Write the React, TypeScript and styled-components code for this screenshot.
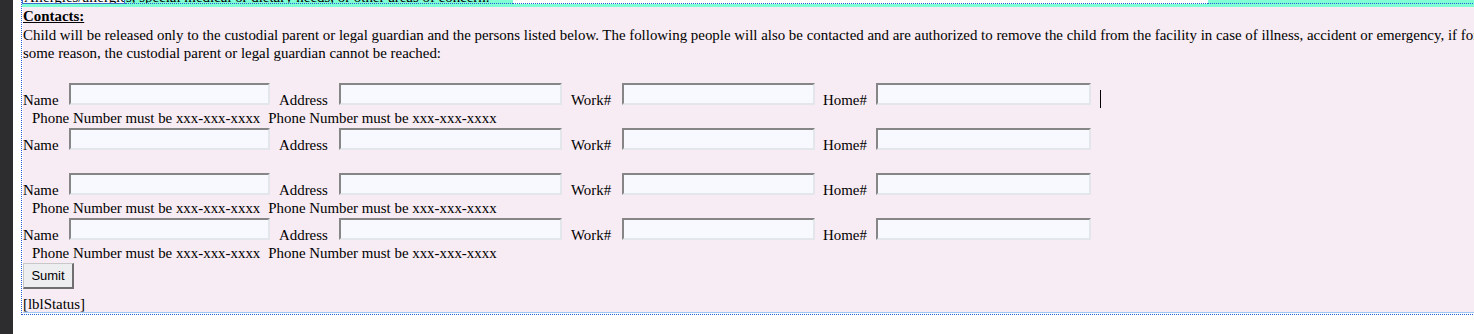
import React from 'react';
import styled, { createGlobalStyle } from 'styled-components';

interface FieldSpec {
    label: string;
    labelWidth: number;
    inputWidth: number;
    after: number;
}

const FIELDS: FieldSpec[] = [
    { label: 'Name', labelWidth: 46, inputWidth: 201, after: 9 },
    { label: 'Address', labelWidth: 60, inputWidth: 223, after: 9 },
    { label: 'Work#', labelWidth: 51, inputWidth: 193, after: 8 },
    { label: 'Home#', labelWidth: 53, inputWidth: 215, after: 0 },
];

const PHONE_MSG = 'Phone Number must be xxx-xxx-xxxx';

const GlobalStyle = createGlobalStyle`
    html, body {
        margin: 0;
        padding: 0;
        background: #ffffff;
        overflow: hidden;
    }
    body {
        font-family: 'Liberation Serif', 'Times New Roman', serif;
        font-size: 14.9px;
        color: #000000;
    }
`;

const Page = styled.div`
    display: flex;
    height: 334px;
    width: 1474px;
    overflow: hidden;
    background: #ffffff;
`;

const SideRail = styled.div`
    flex: none;
    width: 13px;
    background: #2d2d30;
`;

const Gutter = styled.div`
    flex: none;
    width: 8px;
`;

const Designer = styled.div`
    flex: none;
    width: 1520px;
    height: 315px;
    display: flex;
    flex-direction: column;
    border-left: 1px dotted #2a5bd7;
    border-bottom: 1px dotted #2a5bd7;
    box-sizing: border-box;
`;

const TopBand = styled.div`
    flex: none;
    height: 7px;
    display: flex;
    flex-direction: column;
    overflow: hidden;
`;

const TextStrip = styled.div`
    display: flex;
    height: 4px;
    overflow: hidden;
`;

const StripSegment = styled.div<{ $width?: number; $tone: 'box' | 'teal' | 'blank' }>`
    flex: ${({ $width }) => ($width ? 'none' : '1')};
    width: ${({ $width }) => ($width ? `${$width}px` : 'auto')};
    height: 4px;
    box-sizing: border-box;
    overflow: hidden;
    white-space: nowrap;
    background: ${({ $tone }) => ($tone === 'teal' ? '#7fffd4' : '#ffffff')};
    border-bottom: 1px ${({ $tone }) => ($tone === 'box' ? 'solid #3b6fd0' : 'dotted #2a5bd7')};
    border-left: ${({ $tone }) => ($tone === 'box' ? '1px solid #3b6fd0' : 'none')};
    border-right: ${({ $tone }) => ($tone === 'box' ? '1px solid #3b6fd0' : 'none')};
`;

const StripText = styled.div`
    line-height: 18.5px;
    margin-top: -12px;
    padding-left: 1px;
`;

const TealRule = styled.div`
    height: 3px;
    background: #7fffd4;
`;

const ContentPanel = styled.div`
    flex: 1;
    margin-left: 1px;
    margin-bottom: 1px;
    background: #f7ecf3;
    border-bottom: 1px solid #9ec8f3;
    line-height: 18.5px;
    overflow: hidden;
`;

const Heading = styled.div`
    font-weight: bold;
    text-decoration: underline;
`;

const Paragraph = styled.div`
    white-space: nowrap;
`;

const Spacer = styled.div`
    height: 20px;
`;

const FieldRow = styled.div`
    display: flex;
    align-items: flex-start;
    height: 26px;
`;

const FieldLabel = styled.span<{ $width: number }>`
    flex: none;
    width: ${({ $width }) => $width}px;
    margin-top: 8px;
    white-space: nowrap;
`;

const TextBox = styled.input<{ $width: number; $after: number }>`
    flex: none;
    width: ${({ $width }) => $width}px;
    height: 22px;
    margin: 0 ${({ $after }) => $after}px 0 0;
    padding: 0 2px;
    box-sizing: border-box;
    background: #f7f9fe;
    border-style: solid;
    border-width: 2px;
    border-color: #868686 #e3e6ea #e3e6ea #868686;
    font-family: 'Liberation Sans', Arial, sans-serif;
    font-size: 13px;
    outline: none;
`;

const Caret = styled.span`
    flex: none;
    width: 1px;
    height: 18px;
    margin: 7px 0 0 9px;
    background: #000000;
`;

const ValidatorLine = styled.div<{ $hidden?: boolean }>`
    display: flex;
    gap: 8px;
    height: 19px;
    padding-left: 9px;
    white-space: nowrap;
    visibility: ${({ $hidden }) => ($hidden ? 'hidden' : 'visible')};
`;

const SubmitButton = styled.button`
    display: block;
    width: 51px;
    height: 26px;
    margin: 0;
    padding: 0;
    box-sizing: border-box;
    background: #eceef0;
    border-style: solid;
    border-width: 1px 2px 2px 1px;
    border-color: #c8c8c8 #6f6f6f #6f6f6f #c8c8c8;
    font-family: 'Liberation Sans', Arial, sans-serif;
    font-size: 13px;
    color: #000000;
`;

const StatusLabel = styled.div`
    margin-top: 7px;
    line-height: 16px;
`;

const ContactRow = ({ showHints, caret }: { showHints: boolean; caret?: boolean }) => (
    <>
        <FieldRow>
            {FIELDS.map((f) => (
                <React.Fragment key={f.label}>
                    <FieldLabel $width={f.labelWidth}>{f.label}</FieldLabel>
                    <TextBox type='text' $width={f.inputWidth} $after={f.after} readOnly />
                </React.Fragment>
            ))}
            {caret && <Caret />}
        </FieldRow>
        <ValidatorLine $hidden={!showHints}>
            <span>{PHONE_MSG}</span>
            <span>{PHONE_MSG}</span>
        </ValidatorLine>
    </>
);

export default function App() {
    return (
        <>
            <GlobalStyle />
            <Page>
                <SideRail />
                <Gutter />
                <Designer>
                    <TopBand>
                        <TextStrip>
                            <StripSegment $width={103} $tone='box'>
                                <StripText>Allergies/allergies</StripText>
                            </StripSegment>
                            <StripSegment $width={388} $tone='teal'>
                                <StripText>s, special medical or dietary needs, or other areas of concern.</StripText>
                            </StripSegment>
                            <StripSegment $width={695} $tone='blank' />
                            <StripSegment $tone='teal' />
                        </TextStrip>
                        <TealRule />
                    </TopBand>
                    <ContentPanel>
                        <Heading>Contacts:</Heading>
                        <Paragraph>
                            Child will be released only to the custodial parent or legal guardian and the persons
                            listed below. The following people will also be contacted and are authorized to remove the
                            child from the facility in case of illness, accident or emergency, if for
                            <br />
                            some reason, the custodial parent or legal guardian cannot be reached:
                        </Paragraph>
                        <Spacer />
                        <ContactRow showHints caret />
                        <ContactRow showHints={false} />
                        <ContactRow showHints />
                        <ContactRow showHints />
                        <SubmitButton type='button'>Sumit</SubmitButton>
                        <StatusLabel>[lblStatus]</StatusLabel>
                    </ContentPanel>
                </Designer>
            </Page>
        </>
    );
}
